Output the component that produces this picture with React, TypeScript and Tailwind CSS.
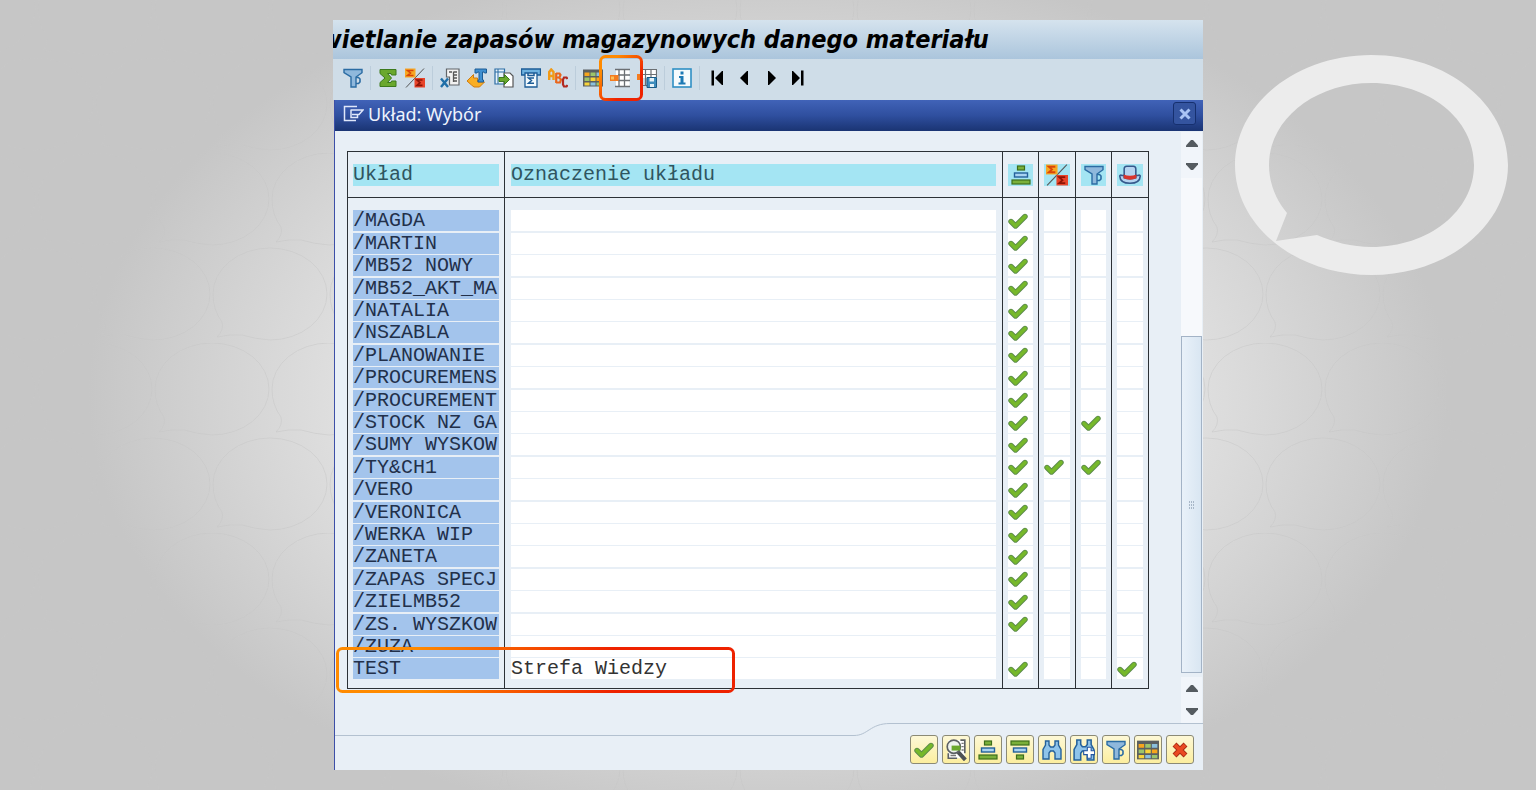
import React from 'react';

type IconProps = { children: React.ReactNode; size?: string };

const Icon: React.FC<IconProps> = ({ children, size = 'h-5 w-5' }) => (
  <svg viewBox="0 0 20 20" className={`${size} shrink-0`} fill="none" aria-hidden="true">
    {children}
  </svg>
);

const FunnelIcon = ({ size }: { size?: string }) => (
  <Icon size={size}>
    <path d="M1 1.5h18v3.2l-6 4.3v10h-5V9L1 4.7z" fill="#8fb8dc" stroke="#2b6ca3" strokeWidth="1.4" />
    <path d="M13 9.5h2.5l1.500 1.500v3l-1.500 1.500H13" stroke="#2b6ca3" strokeWidth="1.6" />
  </Icon>
);

const SumIcon = () => (
  <Icon>
    <path d="M2 1.5h16v5.5h-4.5l-.5-1.500H9.500l4 4.500-4 4.500H13l.5-1.500H18v5.500H2v-4L7 10 2 5.500z" fill="#6aa82d" stroke="#3c7a1c" />
  </Icon>
);

const SubtotalIcon = ({ size }: { size?: string }) => (
  <Icon size={size}>
    <path d="M19 .500L1 19.500" stroke="#555" />
    <rect x="0" y="0.5" width="10.5" height="9" fill="#f7a823" />
    <path d="M8.500 2.500H2.500l3 2.500-3 2.500h6" stroke="#d9460a" strokeWidth="1.6" />
    <rect x="9.5" y="10" width="10.5" height="9.5" fill="#e8442a" />
    <path d="M17.500 12h-5.500l3 2.700-3 2.700h5.500" stroke="#8f1405" strokeWidth="1.6" />
  </Icon>
);

const ExcelIcon = () => (
  <Icon>
    <path d="M6.500 1h12.500v16H9.500V9h-3z" fill="#f2f2f2" stroke="#606468" strokeWidth="1.2" />
    <path d="M9 4h3M14 4h3M13.500 3.500v10.500M14 7h3M14 10h3M14 13h3" stroke="#555" strokeWidth="1.3" />
    <path d="M1 10.500l7 8.500M8 10.500l-7 8.500" stroke="#1f6fa8" strokeWidth="2.4" />
  </Icon>
);

const TextExportIcon = () => (
  <Icon>
    <path d="M0 13l6.500-6.500v3.500h4v4h7l-5 5H7L4.500 17z" fill="#f9ae23" stroke="#cf7b10" />
    <path d="M8 1h11.500v4h-2l-.5-1H15.500v8h1v2h-5.500v-2h1V4H10.500L10 5H8z" fill="#3f8fd0" stroke="#1c5c96" />
  </Icon>
);

const FileExportIcon = () => (
  <Icon>
    <path d="M1 1h9.500v15H1z" fill="#e8f3fb" stroke="#2b6ca3" strokeWidth="1.2" />
    <path d="M1 4h9M4 1v15" stroke="#2b6ca3" />
    <path d="M10 5h6l3 3v11h-9z" fill="#fff" stroke="#555" strokeWidth="1.2" />
    <path d="M5 9.500h5.500V6.500l5 5-5 5v-3H5z" fill="#6aa82d" stroke="#3c7a1c" />
  </Icon>
);

const AbcReportIcon = () => (
  <Icon>
    <path d="M.5 1h19v6h-19z" fill="#6eb2e0" stroke="#1c5c96" strokeWidth="1.3" />
    <path d="M4 5h12v14H4z" fill="#f4fafd" stroke="#1c5c96" strokeWidth="1.3" />
    <path d="M7 5v2.500h6V5M13 10H7.500l3 2.500-3 2.700H13" stroke="#1c5c96" strokeWidth="1.5" />
  </Icon>
);

const AbcIcon = () => (
  <Icon>
    <path d="M1.200 12V4l2-2.500L5.500 4v8M1 8h4" stroke="#f19a17" strokeWidth="2.4" />
    <path d="M8.200 5v10M8 5.500h3.500l1 1.500-1 2.500H8M11 9.500l2 2-1 3H8" stroke="#e9661c" strokeWidth="2.2" />
    <path d="M19.500 11l-1-1.500H16l-1 2v5l1 2h2.500l1-1.500" stroke="#b2281f" strokeWidth="2.2" />
  </Icon>
);

const GridIcon = ({ size }: { size?: string }) => (
  <Icon size={size}>
    <rect x="0" y="1.5" width="20" height="17" fill="#5a5f60" />
    <path d="M1.500 4.500h5v3.500h-5zM13.500 9.500h5V13h-5z" fill="#f6a51c" />
    <path d="M7.500 4.500h5V8h-5zM1.500 9.500h5V13h-5zM13.500 14.500h5v3h-5z" fill="#9cc46a" />
    <path d="M13.500 4.500h5V8h-5zM7.500 14.500h5v3h-5z" fill="#8ac0dc" />
    <path d="M7.500 9.500h5V13h-5zM1.500 14.500h5v3h-5z" fill="#f7d43a" />
  </Icon>
);

const LayoutIcon = () => (
  <Icon>
    <path d="M6 1.500h13.500v17H6z" fill="#fff" />
    <path d="M5 1.500h15M8 7h12M8 12.500h12M5 18.500h15M9 1v18M14.500 1v18" stroke="#6b6f73" strokeWidth="1.3" />
    <path d="M0 7h8.500v6H0z" fill="#f47c20" />
    <path d="M1 8.500h3v3H1z" fill="#fbc05a" />
  </Icon>
);

const SaveLayoutIcon = () => (
  <Icon>
    <path d="M6 1.500h13.500V10H6z" fill="#fff" />
    <path d="M4 1.500h16M6 6.500h14M8.500 1v16M14 1v8M5 17.500h5M19.500 1v8" stroke="#6b6f73" strokeWidth="1.2" />
    <path d="M0 6h5v6H0z" fill="#f47c20" />
    <path d="M10 9.500h9.500v10H10z" fill="#3e8dbd" stroke="#195a86" />
    <path d="M12.500 10h4.500v3.500h-4.500zM13 16h4v3h-4z" fill="#e3f1f8" />
  </Icon>
);

const InfoIcon = () => (
  <Icon>
    <rect x="1" y="1" width="18" height="18" fill="#f6fbfd" stroke="#2f8fc4" strokeWidth="1.6" />
    <path d="M8.500 3.500h3v3h-3zM7 8h4.500v6.500H13.500v2H6.500v-2h2V10H7z" fill="#1d7ab5" />
  </Icon>
);

const FirstIcon = () => (
  <Icon>
    <path d="M4.500 2.500H7v15H4.500zM16 3v14h-1l-7-7 7-7z" fill="#000" />
  </Icon>
);

const PrevIcon = () => (
  <Icon>
    <path d="M14 3v14h-1l-7-7 7-7z" fill="#000" />
  </Icon>
);

const NextIcon = () => (
  <Icon>
    <path d="M7 3v14h1l7-7-7-7z" fill="#000" />
  </Icon>
);

const LastIcon = () => (
  <Icon>
    <path d="M13 2.500h2.500v15H13zM4 3v14h1l7-7-7-7z" fill="#000" />
  </Icon>
);

const AscendingIcon = ({ size }: { size?: string }) => (
  <Icon size={size}>
    <rect x="6.5" y="1" width="7" height="4" fill="#7ab03a" stroke="#3c6e1a" strokeWidth="1.2" />
    <rect x="3.5" y="8" width="13" height="4" fill="#a8d3f2" stroke="#24619b" strokeWidth="1.4" />
    <rect x="1" y="15" width="18" height="4" fill="#7ab03a" stroke="#3c6e1a" strokeWidth="1.2" />
  </Icon>
);

const DescendingIcon = ({ size }: { size?: string }) => (
  <Icon size={size}>
    <rect x="1" y="1" width="18" height="4" fill="#7ab03a" stroke="#3c6e1a" strokeWidth="1.2" />
    <rect x="3.5" y="8" width="13" height="4" fill="#a8d3f2" stroke="#24619b" strokeWidth="1.4" />
    <rect x="6.5" y="15" width="7" height="4" fill="#7ab03a" stroke="#3c6e1a" strokeWidth="1.2" />
  </Icon>
);

const HatIcon = ({ size }: { size?: string }) => (
  <Icon size={size}>
    <path d="M.700 11Q.700 9.500 3 10.500h14q2.300-1 2.300.500Q19 17.500 10 17.500T.700 11z" fill="#b4d3f0" stroke="#35588c" strokeWidth="1.4" />
    <path d="M4.700 12.500V4.500Q4.700 2 7 2h6q2.300 0 2.300 2.500v8Q10 14.500 4.700 12.500z" fill="#b4d3f0" stroke="#35588c" strokeWidth="1.4" />
    <path d="M4.200 9.500Q10 12 15.800 9.500v3.500Q10 15.500 4.200 13z" fill="#d8342c" />
  </Icon>
);

const CheckIcon = ({ size }: { size?: string }) => (
  <Icon size={size}>
    <path d="M3 10.500l4.500 4.500L17 5.500" stroke="#5b8a4c" strokeWidth="5.400" strokeLinecap="round" strokeLinejoin="round" />
    <path d="M3 10.500l4.500 4.500L17 5.500" stroke="#76b82a" strokeWidth="3.600" strokeLinecap="round" strokeLinejoin="round" />
  </Icon>
);

const DetailsIcon = ({ size }: { size?: string }) => (
  <Icon size={size}>
    <path d="M3 1h15v16.500H3z" fill="#fff" />
    <path d="M14 1h4v12M3 13v4.500h8" stroke="#5c6064" strokeWidth="1.5" />
    <path d="M15 4h2M15 7h2M15 10h2M5 15h5" stroke="#777" strokeWidth="1.2" />
    <path d="M12 12l6.500 7" stroke="#4d5155" strokeWidth="3.600" />
    <circle cx="8" cy="7" r="6" fill="#eef3ee" stroke="#5c6064" strokeWidth="1.5" />
    <path d="M6 6h8v4.500H6z" fill="#6aa82d" />
  </Icon>
);

const BinocularsBase = () => (
  <path
    d="M3.500 1h3.500v4l1.500 2h3l1.500-2V1h3.500v4l2.500 4.500V19h-6v-6l-1.500-2h-3L7 13v6H1V9.500L3.500 5z"
    fill="#8fc4ea"
    stroke="#24619b"
    strokeWidth="1.4"
  />
);

const FindIcon = ({ size }: { size?: string }) => (
  <Icon size={size}>
    <BinocularsBase />
  </Icon>
);

const FindNextIcon = ({ size }: { size?: string }) => (
  <Icon size={size}>
    <BinocularsBase />
    <path d="M13 7.500h3.500v3.200h3.200v3.500h-3.200v3.300H13v-3.300H9.700v-3.500H13z" fill="#fff" stroke="#2456a0" />
  </Icon>
);

const CancelIcon = ({ size }: { size?: string }) => (
  <Icon size={size}>
    <path d="M4.500 4.500l11 11M15.500 4.500l-11 11" stroke="#a82a16" strokeWidth="5.500" />
    <path d="M5 5l10 10M15 5L5 15" stroke="#ea4a22" strokeWidth="3.800" />
  </Icon>
);

const WindowIcon = () => (
  <svg viewBox="0 0 21 18" className="h-[18px] w-[21px] shrink-0" fill="none" aria-hidden="true">
    <path d="M13 15.500H1.500v-14H14M7.500 5H20l-4 4.500H9M8 5v7.500h6.500V10" stroke="#dfe7fa" strokeWidth="1.500" />
  </svg>
);

interface ToolbarItem {
  label: string;
  icon: React.ReactNode;
  highlighted?: boolean;
}

const toolbarGroups: ToolbarItem[][] = [
  [{ label: 'Filtr', icon: <FunnelIcon /> }],
  [
    { label: 'Suma', icon: <SumIcon /> },
    { label: 'Suma częściowa', icon: <SubtotalIcon /> },
  ],
  [
    { label: 'Arkusz kalkulacyjny', icon: <ExcelIcon /> },
    { label: 'Edytor tekstu', icon: <TextExportIcon /> },
    { label: 'Plik lokalny', icon: <FileExportIcon /> },
    { label: 'Raport', icon: <AbcReportIcon /> },
    { label: 'Analiza ABC', icon: <AbcIcon /> },
  ],
  [
    { label: 'Zmiana układu', icon: <GridIcon /> },
    { label: 'Wybór układu', icon: <LayoutIcon />, highlighted: true },
    { label: 'Zapis układu', icon: <SaveLayoutIcon /> },
  ],
  [{ label: 'Informacja', icon: <InfoIcon /> }],
  [
    { label: 'Pierwszy', icon: <FirstIcon /> },
    { label: 'Poprzedni', icon: <PrevIcon /> },
    { label: 'Następny', icon: <NextIcon /> },
    { label: 'Ostatni', icon: <LastIcon /> },
  ],
];

const largeIcon = 'h-[22px] w-[22px]';

const footerActions: ToolbarItem[] = [
  { label: 'Dalej', icon: <CheckIcon /> },
  { label: 'Szczegóły', icon: <DetailsIcon size={largeIcon} /> },
  { label: 'Sortuj rosnąco', icon: <AscendingIcon /> },
  { label: 'Sortuj malejąco', icon: <DescendingIcon /> },
  { label: 'Szukaj', icon: <FindIcon /> },
  { label: 'Szukaj dalej', icon: <FindNextIcon size={largeIcon} /> },
  { label: 'Filtruj', icon: <FunnelIcon /> },
  { label: 'Kolumny', icon: <GridIcon size={largeIcon} /> },
  { label: 'Anuluj', icon: <CancelIcon /> },
];

interface LayoutRow {
  name: string;
  description?: string;
  // sort, subtotal, filter, default
  flags: boolean[];
}

const sorted = [true, false, false, false];

const rows: LayoutRow[] = [
  { name: '/MAGDA', flags: sorted },
  { name: '/MARTIN', flags: sorted },
  { name: '/MB52 NOWY', flags: sorted },
  { name: '/MB52_AKT_MA', flags: sorted },
  { name: '/NATALIA', flags: sorted },
  { name: '/NSZABLA', flags: sorted },
  { name: '/PLANOWANIE', flags: sorted },
  { name: '/PROCUREMENS', flags: sorted },
  { name: '/PROCUREMENT', flags: sorted },
  { name: '/STOCK NZ GA', flags: [true, false, true, false] },
  { name: '/SUMY WYSKOW', flags: sorted },
  { name: '/TY&CH1', flags: [true, true, true, false] },
  { name: '/VERO', flags: sorted },
  { name: '/VERONICA', flags: sorted },
  { name: '/WERKA WIP', flags: sorted },
  { name: '/ZANETA', flags: sorted },
  { name: '/ZAPAS SPECJ', flags: sorted },
  { name: '/ZIELMB52', flags: sorted },
  { name: '/ZS. WYSZKOW', flags: sorted },
  { name: '/ZUZA', flags: [false, false, false, false] },
  { name: 'TEST', description: 'Strefa Wiedzy', flags: [true, false, false, true] },
];

const flagColumns = [
  { label: 'Sortowanie', icon: <AscendingIcon /> },
  { label: 'Suma częściowa', icon: <SubtotalIcon size={largeIcon} /> },
  { label: 'Filtr', icon: <FunnelIcon /> },
  { label: 'Ustawienie wstępne', icon: <HatIcon size={largeIcon} /> },
];

const Highlight: React.FC<{ id: string; width: number; height: number; className: string }> = ({
  id,
  width,
  height,
  className,
}) => (
  <svg
    viewBox={`0 0 ${width} ${height}`}
    width={width}
    height={height}
    className={`pointer-events-none absolute z-10 max-w-none ${className}`}
    fill="none"
    aria-hidden="true"
  >
    <defs>
      <linearGradient id={id} x1="0" y1="0" x2="1" y2={width > height * 2 ? '0' : '1'}>
        <stop offset="0.2" stopColor="#ff8a00" />
        <stop offset="0.7" stopColor="#ee2200" />
      </linearGradient>
    </defs>
    <rect x="1.5" y="1.5" width={width - 3} height={height - 3} rx="5" stroke={`url(#${id})`} strokeWidth="3" />
  </svg>
);

const Toolbar = () => (
  <div className="flex h-[41px] items-center bg-[#cfdde8] pb-1 pl-[6px]">
    {toolbarGroups.map((group, index) => (
      <React.Fragment key={index}>
        {index > 0 && (
          <div className="flex w-2 justify-center">
            <span className="h-6 w-px bg-[#bccddb]" />
          </div>
        )}
        {group.map(item => (
          <button key={item.label} type="button" aria-label={item.label} className="relative flex w-[27px] justify-center">
            {item.icon}
            {item.highlighted && <Highlight id="tool-mark" width={44} height={46} className="-left-[7px] -top-[13px]" />}
          </button>
        ))}
      </React.Fragment>
    ))}
  </div>
);

const LayoutTable = () => (
  <div className="relative min-w-0 flex-1">
    <table className="w-full table-fixed border-collapse border border-[#2c3136] font-['Liberation_Mono',monospace] text-[20px] leading-[22px] text-[#22304a]">
      <colgroup>
        <col className="w-[157px]" />
        <col />
        <col className="w-9" />
        <col className="w-[37px]" />
        <col className="w-9" />
        <col className="w-[37px]" />
      </colgroup>
      <thead>
        <tr className="h-[46px] border-b border-[#2c3136] text-left">
          <th scope="col" className="border-r border-[#2c3136] px-[5px] font-normal">
            <div className="bg-[#a4e5f3] text-[#2f5560]">Układ</div>
          </th>
          <th scope="col" className="border-r border-[#2c3136] px-[6px] font-normal">
            <div className="bg-[#a4e5f3] text-[#2f5560]">Oznaczenie układu</div>
          </th>
          {flagColumns.map(column => (
            <th key={column.label} scope="col" aria-label={column.label} className="border-r border-[#2c3136] px-[5px]">
              <div className="flex h-[22px] items-center justify-center bg-[#a4e5f3]">{column.icon}</div>
            </th>
          ))}
        </tr>
      </thead>
      <tbody>
        <tr className="h-3" aria-hidden="true">
          {[0, 1, 2, 3, 4, 5].map(cell => (
            <td key={cell} className="border-r border-[#2c3136]" />
          ))}
        </tr>
        {rows.map((row, index) => (
          <tr key={row.name} className={index % 5 === 1 || index % 5 === 3 ? 'h-[23px]' : 'h-[22px]'}>
            <td className="border-r border-[#2c3136] px-[5px] py-0">
              <div className="h-[21px] overflow-hidden whitespace-nowrap bg-[#a3c4ec]">{row.name}</div>
            </td>
            <td className="border-r border-[#2c3136] px-[6px] py-0">
              <div className="h-[21px] bg-white text-[#333]">{row.description}</div>
            </td>
            {row.flags.map((flag, column) => (
              <td key={flagColumns[column].label} className="border-r border-[#2c3136] px-[5px] py-0">
                <div className="flex h-[21px] items-center bg-white">
                  {flag && <CheckIcon />}
                </div>
              </td>
            ))}
          </tr>
        ))}
        <tr className="h-[9px]" aria-hidden="true">
          {[0, 1, 2, 3, 4, 5].map(cell => (
            <td key={cell} className="border-r border-[#2c3136]" />
          ))}
        </tr>
      </tbody>
    </table>
    <Highlight id="row-mark" width={399} height={46} className="-bottom-1 -left-[11px]" />
  </div>
);

const ArrowButton: React.FC<{ direction: 'up' | 'down' }> = ({ direction }) => (
  <button
    type="button"
    aria-label={direction === 'up' ? 'Przewiń w górę' : 'Przewiń w dół'}
    className="flex h-[23px] w-full items-center justify-center bg-[#f1f5fa]"
  >
    <svg viewBox="0 0 12 7" className="h-[7px] w-3" aria-hidden="true">
      <path d={direction === 'up' ? 'M0 7V5.500L5 0h2l5 5.500V7z' : 'M0 0v1.500L5 7h2l5-5.500V0z'} fill="#555b60" />
    </svg>
  </button>
);

const Scrollbar = () => (
  <div className="mt-px flex w-[21px] flex-col">
    <ArrowButton direction="up" />
    <ArrowButton direction="down" />
    <div className="flex flex-1 flex-col justify-end bg-[#f7f9fc]">
      <div className="flex h-[337px] items-center justify-center border border-[#a3b3c6] bg-linear-to-r from-[#e9f1f9] to-[#d9e6f2]">
        <span className="grid grid-cols-3 gap-px">
          {[0, 1, 2, 3, 4, 5, 6, 7, 8].map(dot => (
            <span key={dot} className="h-[2px] w-px bg-[#a8b7c8]" />
          ))}
        </span>
      </div>
    </div>
    <div className="pt-1">
      <ArrowButton direction="up" />
      <ArrowButton direction="down" />
    </div>
  </div>
);

const DialogFooter = () => (
  <footer className="flex h-[47px]">
    <div className="mt-3 flex-1 border-t border-[#b3c1d0]" />
    <svg viewBox="0 0 36 14" className="h-[14px] w-9" fill="none" aria-hidden="true">
      <path d="M0 12.500C14 12.500 16 .5 36 .5" stroke="#b3c1d0" />
    </svg>
    <div className="flex items-start gap-1 border-t border-[#b3c1d0] pl-5 pr-[9px] pt-[11px]">
      {footerActions.map(action => (
        <button
          key={action.label}
          type="button"
          aria-label={action.label}
          className="flex h-[29px] w-7 items-center justify-center rounded-[3px] border border-[#8b8a76] bg-linear-to-b from-[#fdf8d6] to-[#fcee9f]"
        >
          {action.icon}
        </button>
      ))}
    </div>
  </footer>
);

const LayoutDialog = () => (
  <section aria-label="Układ: Wybór" className="ml-px border-l border-[#3c4fa8] bg-[#e8eff6]">
    <header className="flex h-[31px] items-center bg-linear-to-b from-[#4163b8] via-[#2f4f9f] to-[#1a3473] pb-1 pl-2 pr-[7px]">
      <WindowIcon />
      <h2 className="flex-1 pl-1 font-['Noto_Sans',sans-serif] text-[18px] leading-6 text-[#eef3fd]">Układ: Wybór</h2>
      <button
        type="button"
        aria-label="Zamknij"
        className="flex h-[23px] w-[23px] items-center justify-center rounded-[3px] border border-[#16306f] bg-[#34549f]"
      >
        <svg viewBox="0 0 12 12" className="h-3 w-3" aria-hidden="true">
          <path d="M1.500 1.500l9 9M10.500 1.500l-9 9" stroke="#a9c4f5" strokeWidth="3" />
        </svg>
      </button>
    </header>
    <div className="flex h-[592px] justify-between pr-px">
      <div className="flex min-w-0 flex-1 items-start pl-3 pr-8 pt-5">
        <LayoutTable />
      </div>
      <Scrollbar />
    </div>
    <DialogFooter />
  </section>
);

const outline = 'M-57 0A57 46 0 0 1 57 0A57 46 0 0 1 0 46Q-15 45-28 41Q-40 40-53 43Q-46 36-48 28Q-57 16-57 0z';

const Backdrop = () => (
  <svg className="absolute inset-0 -z-10 h-full w-full" aria-hidden="true">
    <defs>
      <pattern id="bubbles" x="36" y="-37" width="117" height="190" patternUnits="userSpaceOnUse">
        <g fill="none" stroke="#c6c6c6" strokeOpacity="0.5">
          <path d={outline} transform="translate(59 46)" />
          <path d={outline} transform="translate(0 141)" />
          <path d={outline} transform="translate(117 141)" />
        </g>
      </pattern>
    </defs>
    <rect width="100%" height="100%" fill="url(#bubbles)" />
  </svg>
);

const SpeechBubble = () => (
  <svg viewBox="0 0 273 220" className="ml-1 mt-[55px] h-auto w-[273px] justify-self-center" aria-hidden="true">
    <path
      fillRule="evenodd"
      fill="#ececec"
      d="M136.500 0C212 0 273 49 273 110S212 220 136.500 220 0 171 0 110 61 0 136.500 0zM136.500 28C80 28 34 64 34 110C34 128 41 145 52 158L41 186L82 180C98 187 117 192 136.500 192C194 192 239 156 239 110S194 28 136.500 28z"
    />
  </svg>
);

export default function App() {
  return (
    <main className="relative isolate grid min-h-screen grid-cols-[1fr_minmax(0,870px)_1fr] items-start bg-[#c6c6c6] bg-[radial-gradient(ellipse_680px_440px_at_50%_50%,#ffffff_15%,#c6c6c6_100%)]">
      <Backdrop />
      <div />
      <div className="my-5 min-w-0">
        <div className="flex h-[39px] items-center overflow-hidden bg-linear-to-b from-[#d5e3ee] to-[#abc5dc]">
          <h1 className="-ml-3 whitespace-nowrap font-['DejaVu_Sans_Condensed','DejaVu_Sans',sans-serif] text-[25px] font-bold italic leading-8 text-black">
            wietlanie zapasów magazynowych danego materiału
          </h1>
        </div>
        <Toolbar />
        <LayoutDialog />
      </div>
      <SpeechBubble />
    </main>
  );
}
